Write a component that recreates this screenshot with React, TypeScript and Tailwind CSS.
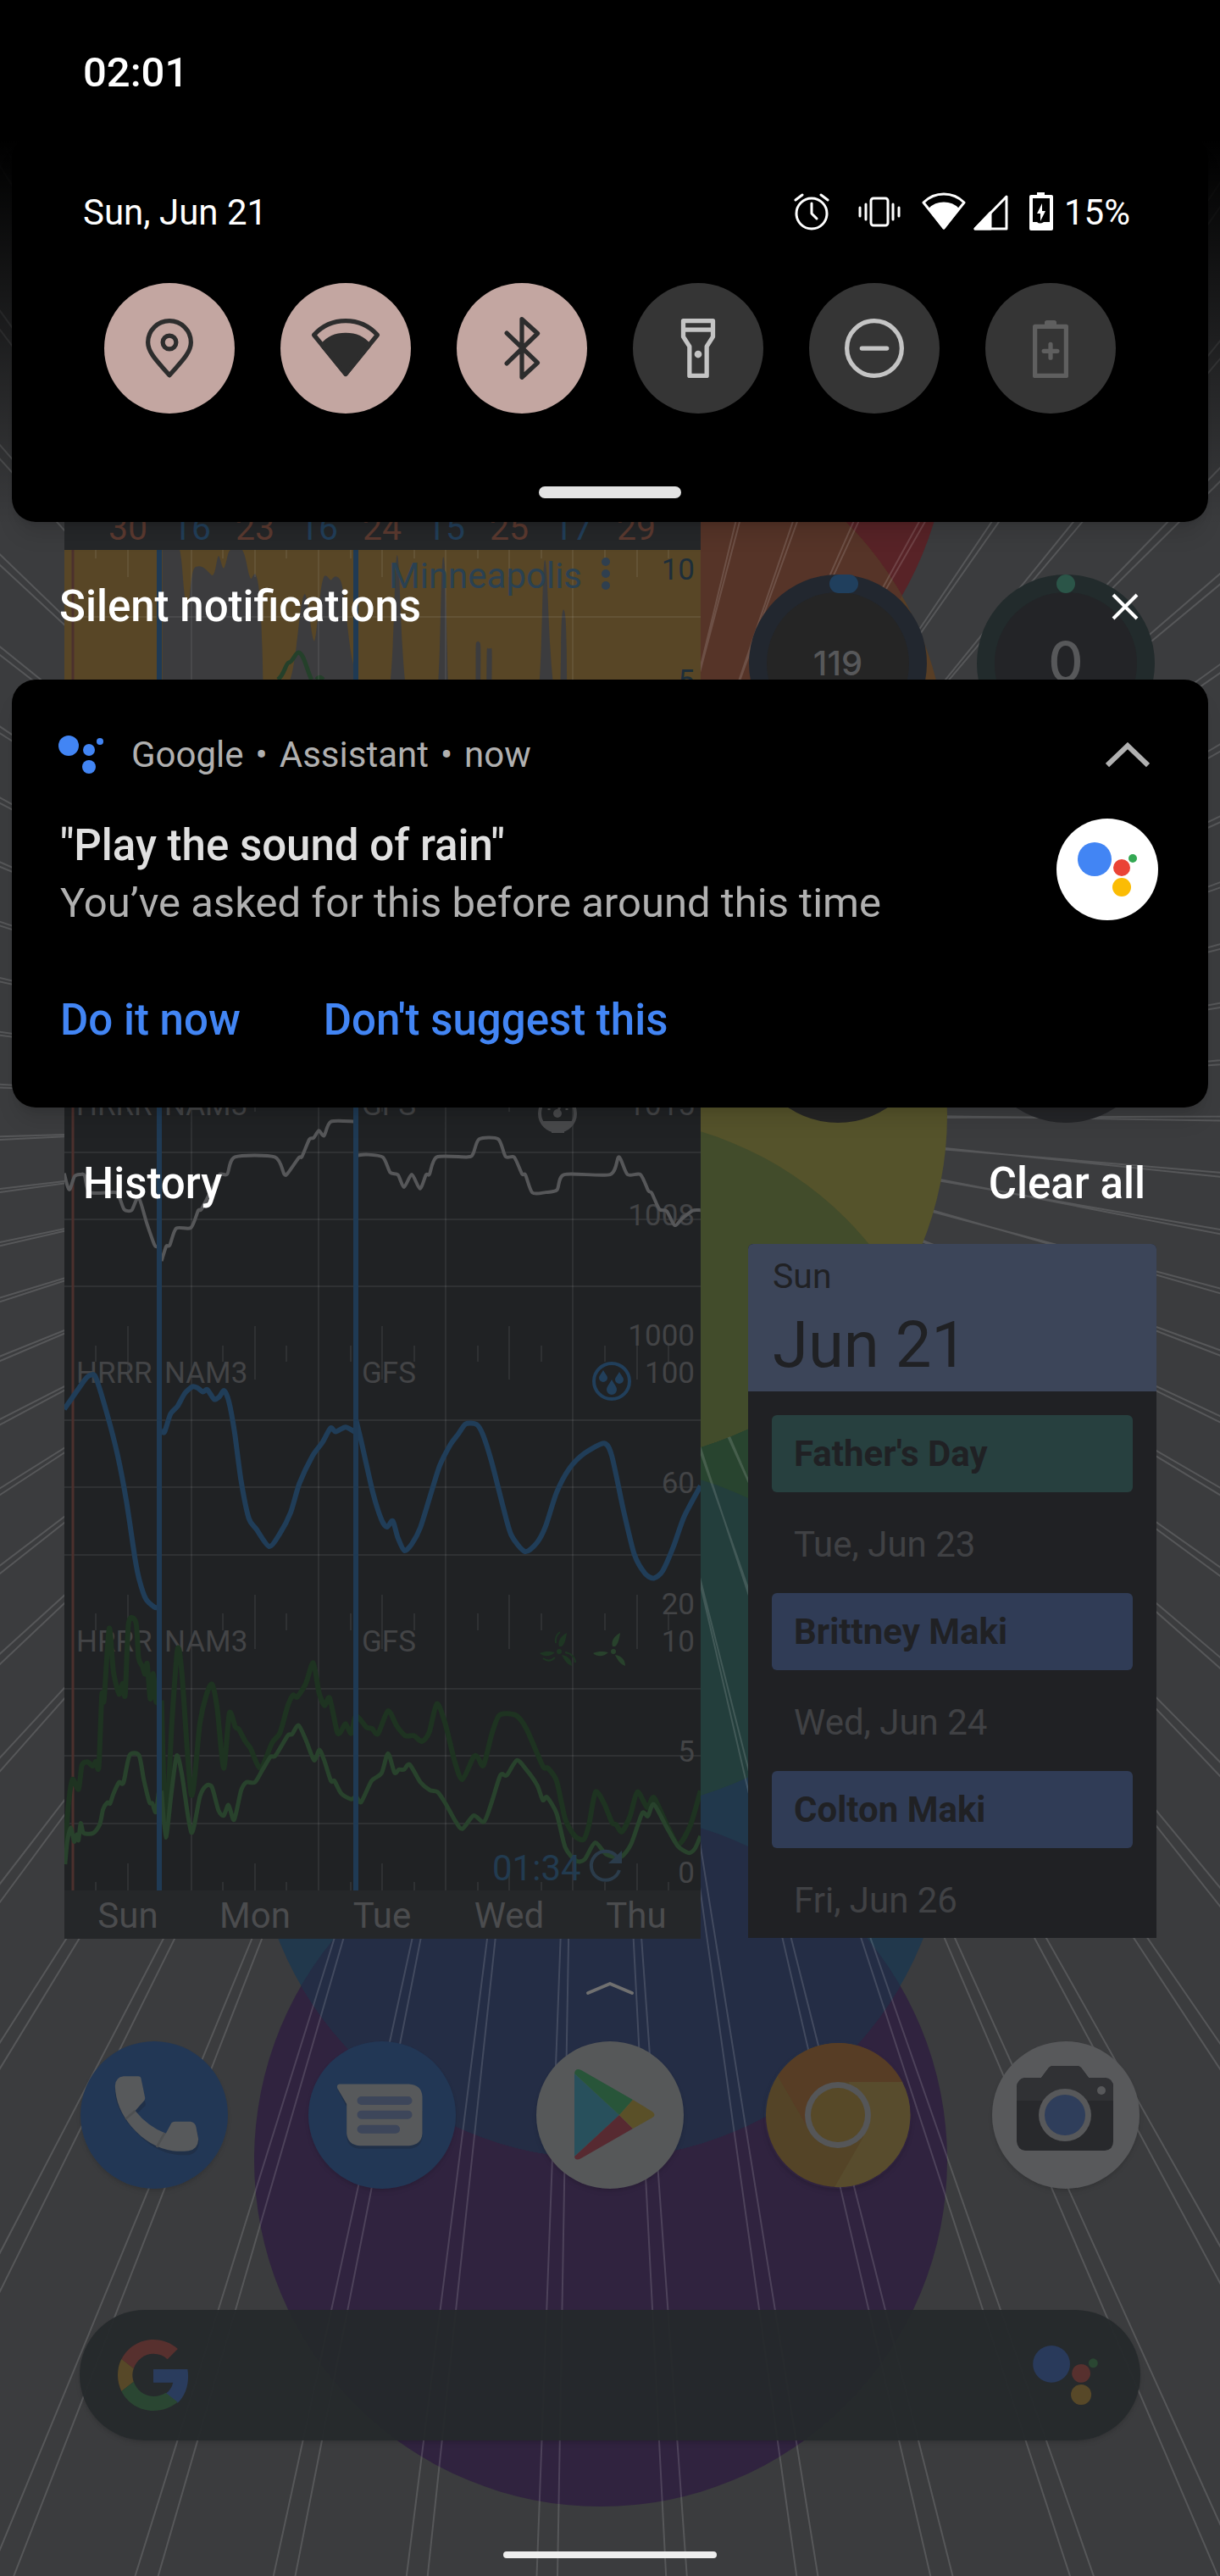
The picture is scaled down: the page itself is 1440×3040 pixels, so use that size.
import type { ReactNode } from 'react';

type Point = [number, number];

// Smooth line through the readings, for svg path data
const smooth = (points: Point[]) => {
    let d = `M${points[0][0]} ${points[0][1]}`;
    for (let i = 0; i < points.length - 1; i++) {
        const prev = points[i - 1] ?? points[i];
        const from = points[i];
        const to = points[i + 1];
        const next = points[i + 2] ?? to;
        const c1 = [from[0] + (to[0] - prev[0]) / 8, from[1] + (to[1] - prev[1]) / 8];
        const c2 = [to[0] - (next[0] - from[0]) / 8, to[1] - (next[1] - from[1]) / 8];
        d += `C${c1[0].toFixed(1)} ${c1[1].toFixed(1)} ${c2[0].toFixed(1)} ${c2[1].toFixed(1)} ${to[0]} ${to[1]}`;
    }
    return d;
};

const PRESSURE: Point[][] = [
    [[31, 265], [38, 305], [44, 318], [55, 275], [68, 269], [78, 272], [90, 328], [150, 328], [160, 350], [170, 385], [187, 387], [203, 345], [222, 430], [240, 502], [248, 507]],
    [[256, 555], [267, 506], [275, 503], [290, 447], [324, 445], [341, 388], [348, 385], [368, 330], [390, 270], [408, 268], [426, 211], [518, 211], [540, 268], [548, 265], [574, 213], [581, 210], [598, 153], [608, 148], [620, 124], [632, 141], [648, 94], [703, 94]],
    [[710, 206], [730, 203], [768, 212], [785, 262], [803, 270], [817, 311], [835, 269], [854, 316], [868, 270], [876, 268], [893, 211], [965, 211], [977, 200], [991, 152], [1035, 152], [1052, 210], [1072, 212], [1090, 267], [1098, 270], [1114, 329], [1145, 328], [1171, 320], [1188, 269], [1294, 269], [1314, 211], [1334, 269], [1364, 269], [1382, 322], [1390, 330], [1408, 384], [1425, 390], [1443, 437], [1460, 415], [1485, 388], [1503, 387]]
];

const HUMIDITY: Point[][] = [
    [[31, 1045], [60, 985], [80, 945], [92, 932], [104, 940], [130, 1060], [155, 1200], [175, 1350], [195, 1540], [205, 1610], [220, 1672], [240, 1699], [248, 1699]],
    [[256, 1115], [263, 1120], [277, 1060], [293, 1035], [310, 992], [328, 970], [340, 975], [352, 987], [362, 980], [378, 1012], [390, 1003], [401, 983], [412, 1020], [425, 1120], [440, 1280], [458, 1405], [475, 1440], [505, 1498], [530, 1455], [555, 1385], [575, 1290], [605, 1200], [628, 1155], [647, 1107], [659, 1119], [682, 1104], [706, 1122]],
    [[706, 1080], [718, 1150], [745, 1320], [765, 1410], [778, 1434], [791, 1414], [803, 1470], [818, 1512], [835, 1490], [855, 1435], [880, 1320], [900, 1230], [925, 1160], [942, 1128], [960, 1093], [985, 1095], [1000, 1130], [1020, 1220], [1045, 1360], [1065, 1460], [1097, 1515], [1125, 1485], [1145, 1430], [1170, 1320], [1200, 1240], [1235, 1190], [1280, 1157], [1298, 1200], [1325, 1380], [1350, 1525], [1375, 1588], [1395, 1603], [1415, 1580], [1440, 1500], [1465, 1400], [1503, 1298]]
];

const GUSTS: Point[][] = [
    [[33, 1160], [40, 1000], [50, 900], [64, 935], [72, 850], [85, 838], [97, 853], [104, 836], [111, 855], [118, 600], [123, 620], [135, 365], [145, 520], [158, 598], [166, 560], [172, 600], [180, 345], [197, 345], [203, 470], [212, 500], [218, 527], [223, 490], [230, 615], [237, 525], [243, 622], [250, 625]],
    [[256, 620], [266, 1075], [280, 700], [293, 440], [303, 520], [325, 955], [345, 700], [360, 600], [373, 563], [385, 650], [400, 860], [413, 665], [427, 715], [435, 722], [450, 765], [462, 790], [485, 860], [512, 770], [530, 735], [548, 640], [560, 602], [570, 608], [590, 560], [607, 487], [620, 590], [633, 638], [645, 612], [662, 730], [670, 733], [682, 703], [695, 737], [706, 675], [730, 715], [743, 720], [757, 738], [780, 657], [800, 710], [820, 745], [840, 745], [858, 765], [875, 735], [893, 632], [912, 700], [935, 840], [952, 900], [978, 820], [988, 822], [1001, 850], [1020, 740], [1038, 672], [1075, 672], [1100, 720], [1138, 852], [1150, 860], [1170, 905], [1190, 1040], [1212, 1100], [1233, 1112], [1245, 1060], [1260, 945], [1280, 985], [1298, 1052], [1308, 1060], [1321, 1085], [1340, 1030], [1357, 944], [1380, 1000], [1395, 964], [1425, 1060], [1452, 1130], [1480, 1060], [1503, 940]]
];

const WIND: Point[][] = [
    [[33, 1200], [38, 1120], [46, 1070], [54, 1120], [60, 1095], [64, 1115], [69, 1055], [76, 1090], [98, 1090], [113, 1060], [121, 1005], [131, 982], [137, 985], [145, 950], [158, 910], [168, 912], [182, 815], [204, 815], [215, 900], [228, 980], [235, 985], [243, 1016], [250, 940]],
    [[256, 940], [266, 1105], [278, 960], [291, 816], [303, 880], [325, 1088], [345, 960], [360, 922], [373, 928], [388, 1010], [400, 1028], [411, 990], [424, 1043], [440, 940], [452, 910], [472, 910], [490, 865], [508, 820], [520, 815], [548, 745], [558, 740], [573, 708], [590, 760], [609, 832], [621, 795], [632, 830], [648, 905], [656, 905], [672, 950], [695, 970], [706, 960], [718, 980], [742, 905], [765, 878], [780, 808], [795, 876], [805, 865], [817, 865], [830, 847], [855, 910], [877, 938], [895, 945], [915, 990], [935, 1045], [952, 1075], [978, 1028], [1002, 1050], [1020, 980], [1040, 885], [1055, 885], [1078, 832], [1100, 865], [1125, 920], [1138, 973], [1148, 963], [1170, 1020], [1190, 1140], [1215, 1188], [1235, 1183], [1259, 1124], [1285, 1165], [1318, 1175], [1342, 1130], [1368, 1020], [1381, 1030], [1395, 988], [1425, 1070], [1450, 1135], [1475, 1160], [1490, 1145], [1503, 1100]]
];

// [left, peak, right, top]
const CLOUD_SPIKES = [
    [785, 801, 820, 165],
    [896, 908, 919, 172],
    [983, 988, 994, 470],
    [1008, 1014, 1020, 495],
    [1130, 1143, 1162, 182],
    [1179, 1186, 1194, 358]
];

const TEMPERATURES = ['30', '16', '23', '16', '24', '15', '25', '17', '29'];
const DAYS = ['Sun', 'Mon', 'Tue', 'Wed', 'Thu'];

const AXIS_LABELS = [
    { text: '1015', y: 1316 },
    { text: '1008', y: 1446 },
    { text: '1000', y: 1588 },
    { text: '100', y: 1632 },
    { text: '60', y: 1762 },
    { text: '20', y: 1905 },
    { text: '10', y: 1949 },
    { text: '5', y: 2079 },
    { text: '0', y: 2222 }
];

const EVENTS = [
    { title: "Father's Day", nextDate: 'Tue, Jun 23', color: 'bg-[#27403f]' },
    { title: 'Brittney Maki', nextDate: 'Wed, Jun 24', color: 'bg-[#303c56]' },
    { title: 'Colton Maki', nextDate: 'Fri, Jun 26', color: 'bg-[#303c56]' }
];

const RAYS = Array.from({ length: 71 }, (_, i) => 0.3 + i * (360 / 71));

const Wallpaper = () => (
    <svg className="h-full w-full [grid-area:1/1]" viewBox="0 0 1440 3040" preserveAspectRatio="xMidYMid slice" aria-hidden="true">
        <defs>
            <clipPath id="red-disc"><circle cx="709" cy="497" r="411" /></clipPath>
            <clipPath id="green-disc"><circle cx="709" cy="1727" r="409" /></clipPath>
            <clipPath id="blue-disc"><circle cx="709" cy="2138" r="409" /></clipPath>
        </defs>
        <rect width="1440" height="3040" fill="#3b3c3e" />
        <circle cx="709" cy="2549" r="409" fill="#30233f" />
        <circle cx="709" cy="2138" r="409" fill="#21384c" />
        <circle cx="709" cy="2549" r="409" fill="#242d45" clipPath="url(#blue-disc)" />
        <circle cx="709" cy="1727" r="409" fill="#28442f" />
        <circle cx="709" cy="2138" r="409" fill="#233e3c" clipPath="url(#green-disc)" />
        <circle cx="709" cy="497" r="411" fill="#582327" />
        <circle cx="709" cy="905" r="409" fill="#583e25" />
        <circle cx="709" cy="905" r="409" fill="#563428" clipPath="url(#red-disc)" />
        <g stroke="#fff" strokeOpacity="0.14" strokeWidth="2">
            {RAYS.map((angle) => (
                <g key={angle} transform={`translate(693 1316) rotate(${angle.toFixed(2)})`}>
                    <path d="M400 -1 2200 17M400 1 2200 -17" />
                </g>
            ))}
        </g>
        <circle cx="709" cy="1316" r="409" fill="#55532b" />
        <circle cx="709" cy="1316" r="409" fill="#424c2b" clipPath="url(#green-disc)" />
    </svg>
);

const WeatherWidget = () => (
    <svg className="w-full font-[Roboto,sans-serif]" viewBox="76 560 751 1728" role="img" aria-label="Minneapolis weather forecast">
        <rect x="76" y="560" width="751" height="1728" fill="#202224" />
        <rect x="76" y="560" width="751" height="89" fill="#252729" />
        <rect x="76" y="2231" width="751" height="57" fill="#252729" />
        <rect x="76" y="649" width="751" height="300" fill="#584626" />

        <g fontSize="41" textAnchor="middle">
            {TEMPERATURES.map((temp, i) => (
                <text key={i} x={151 + i * 75} y="637" fill={i % 2 ? '#223f5a' : '#5c3a30'}>{temp}</text>
            ))}
        </g>

        <g transform="translate(60 600) scale(.5102 .3333)" fill="#3c3c3e">
            <path d="M258 620V147H298C306 190 306 330 316 345 324 330 322 215 335 207 350 200 355 210 373 238 382 235 383 175 388 168 393 175 395 210 400 212 407 200 408 150 416 147H443C455 180 455 240 464 250 467 240 470 230 473 232 485 260 488 400 491 620Z" />
            <path d="M550 620C570 560 575 310 588 302 598 330 602 465 610 470 618 440 622 240 635 238 642 240 645 258 650 252 656 240 660 236 668 250 682 270 688 520 703 565V620Z" />
            {CLOUD_SPIKES.map(([left, peak, right, top]) => (
                <path key={peak} d={`M${left} 620C${peak - 5} 450 ${peak - 6} ${top + 10} ${peak} ${top} ${peak + 7} ${top + 10} ${peak + 7} 450 ${right} 620Z`} />
            ))}
            <path
                d="M525 606C540 590 543 550 550 546 560 545 565 510 573 510 585 512 592 570 603 606M615 606Q622 590 630 606"
                fill="none"
                stroke="#24402a"
                strokeWidth="5"
                vectorEffect="non-scaling-stroke"
            />
        </g>

        <g stroke="#fff" strokeOpacity="0.07" strokeWidth="2">
            <path d="M226 649V2231M376 649V2231M526 649V2231M676 649V2231" />
            <path d="M76 728H827M76 1360H827M76 1439H827M76 1518H827M76 1676H827M76 1755H827M76 1835H827M76 1993H827M76 2072H827M76 2152H827" />
            {[151, 301, 451, 601, 752].map((x) => (
                <path key={x} d={`M${x} 649V681M${x} 1290V1312M${x} 1565V1628M${x} 1882V1946M${x} 2199V2231`} />
            ))}
            {[113, 263, 338, 414, 489, 564, 639, 714, 789].map((x) => (
                <path key={x} d={`M${x} 649V659M${x} 1588V1607M${x} 1904V1924M${x} 2221V2231`} />
            ))}
        </g>

        <path d="M86 649V2231" stroke="#4c302d" strokeWidth="3" />

        <g fontSize="35" fill="#434446">
            {[1316, 1632, 1949].map((y) => (
                <g key={y}>
                    <text x="90" y={y}>HRRR</text>
                    <text x="194" y={y}>NAM3</text>
                    <text x="427" y={y}>GFS</text>
                </g>
            ))}
            {AXIS_LABELS.map(({ text, y }) => (
                <text key={text} x="820" y={y} textAnchor="end">{text}</text>
            ))}
            <text x="820" y="684" textAnchor="end" fill="#1d2e3a">10</text>
            <text x="820" y="815" textAnchor="end" fill="#1d2e3a">5</text>
        </g>

        <g fill="none" strokeLinejoin="round">
            <g transform="translate(60 1800) scale(.5102 .3333)">
                {GUSTS.map((line, i) => (
                    <path key={i} d={smooth(line)} stroke="#1e3321" strokeWidth="6" vectorEffect="non-scaling-stroke" />
                ))}
                {WIND.map((line, i) => (
                    <path key={i} d={smooth(line)} stroke="#28422c" strokeWidth="5" vectorEffect="non-scaling-stroke" />
                ))}
            </g>
            <g transform="translate(60 1290) scale(.5102 .3571)">
                {PRESSURE.map((line, i) => (
                    <path key={i} d={smooth(line)} stroke="#565759" strokeWidth="4" vectorEffect="non-scaling-stroke" />
                ))}
                {HUMIDITY.map((line, i) => (
                    <path key={i} d={smooth(line)} stroke="#203d58" strokeWidth="6" vectorEffect="non-scaling-stroke" />
                ))}
            </g>
        </g>

        <path d="M188 649V2231M420 649V2231" stroke="#1f3a54" strokeWidth="6" />

        {/* pressure gauge */}
        <g>
            <circle cx="658" cy="1314" r="21" fill="none" stroke="#48494b" strokeWidth="4" />
            <path d="M639 1323H678Q673 1332 666 1333V1337H651V1333Q644 1332 639 1323Z" fill="#48494b" />
            <circle cx="658" cy="1314" r="5" fill="#48494b" />
            <path d="M658 1314 662 1302M648 1310V1308M669 1310V1308" stroke="#48494b" strokeWidth="3" />
        </g>

        {/* humidity */}
        <g>
            <circle cx="722" cy="1630" r="21" fill="none" stroke="#213f5b" strokeWidth="4" />
            <path
                d="M712 1617C715 1622 717 1624 717 1626A5 5 0 0 1 707 1626C707 1624 709 1622 712 1617ZM731 1619C734 1624 736 1626 736 1628A5 5 0 0 1 726 1628C726 1626 728 1624 731 1619ZM722 1628C726 1635 728 1637 728 1640A6 6 0 0 1 716 1640C716 1637 718 1635 722 1628Z"
                fill="#213f5b"
            />
        </g>

        {/* wind turbines */}
        <g fill="#28422c">
            <path d="M723 1943C721 1936 725 1931 732 1927 731 1935 729 1941 726 1943ZM718 1950C713 1955 705 1956 700 1951 707 1948 713 1949 718 1950ZM726 1953C733 1954 738 1958 738 1966 732 1964 729 1959 726 1953ZM721 1949A3 3 0 0 1 727 1949 3 3 0 0 1 721 1949Z" />
        </g>
        <g fill="#1e3623">
            <path d="M660 1943C658 1936 662 1931 669 1927 668 1935 666 1941 663 1943ZM655 1950C650 1955 642 1956 637 1951 644 1948 650 1949 655 1950ZM663 1953C670 1954 675 1958 675 1966 669 1964 666 1959 663 1953ZM657 1949A3 3 0 0 1 663 1949 3 3 0 0 1 657 1949Z" />
            <path d="M656 1939C655 1933 657 1929 661 1926M641 1957C646 1961 651 1960 655 1956M667 1950C674 1951 679 1956 679 1962" fill="none" stroke="#1e3623" strokeWidth="2" />
        </g>

        <g fontSize="42">
            <text x="459" y="694" fill="#2a4152">Minneapolis</text>
            <text x="581" y="2219" fill="#223b50">01:34</text>
            <g fill="#4b4c4e" textAnchor="middle">
                {DAYS.map((day, i) => (
                    <text key={day} x={151 + i * 150} y="2275">{day}</text>
                ))}
            </g>
        </g>
        <g fill="#2f3f4f">
            <circle cx="715" cy="663" r="5" />
            <circle cx="715" cy="677" r="5" />
            <circle cx="715" cy="691" r="5" />
        </g>
        <path d="M728 2191A17 17 0 1 0 731 2207" fill="none" stroke="#2b3c4b" strokeWidth="4" />
        <path d="M734 2184V2199H718Z" fill="#2b3c4b" />
    </svg>
);

const StatusGauges = () => (
    <svg className="w-full font-[Inter,sans-serif]" viewBox="883 560 482 908" role="img" aria-label="Status gauges">
        <circle cx="989" cy="783" r="105" fill="#22272f" />
        <circle cx="989" cy="783" r="84" fill="#252525" />
        <rect x="979" y="678" width="34" height="22" rx="11" fill="#203f5d" />
        <circle cx="1258" cy="783" r="105" fill="#222b2c" />
        <circle cx="1258" cy="783" r="84" fill="#232427" />
        <circle cx="1258" cy="689" r="11" fill="#2b5548" />
        <g fill="#57585a" textAnchor="middle" fontWeight="500">
            <text x="989" y="797" fontSize="40">119</text>
            <text x="1258" y="804" fontSize="64">0</text>
        </g>
        <circle cx="989" cy="1220" r="105" fill="#252525" />
        <circle cx="1258" cy="1220" r="105" fill="#242528" />
    </svg>
);

const CalendarWidget = () => (
    <section className="overflow-hidden rounded-t-md bg-[#202124] text-[#202124]">
        <header className="bg-[#3c4559] px-[29px] pt-[14px] pb-[10px]">
            <p className="text-[41px] leading-[48px]">Sun</p>
            <h2 className="mt-3 text-[76px] leading-[90px]">Jun 21</h2>
        </header>
        <ul className="px-7 pt-7">
            {EVENTS.map(({ title, nextDate, color }) => (
                <li key={title} className="pb-[27px] last:pb-[14px]">
                    <p className={`rounded-md px-[26px] text-[42px] leading-[91px] font-bold ${color}`}>{title}</p>
                    <p className="mt-8 px-[26px] text-[42px] leading-[60px] text-[#404144]">{nextDate}</p>
                </li>
            ))}
        </ul>
    </section>
);

const PhoneIcon = () => (
    <svg className="size-[174px]" viewBox="48 55 520 520">
        <circle cx="308" cy="315" r="260" fill="#223755" />
        <path d="M200 190H262L278 280 244 314Q290 370 345 395L375 352H440Q456 354 460 375L466 410Q464 450 430 456 340 462 270 400 168 310 170 225 172 190 200 190Z" fill="#203048" />
        <path d="M200 178H252Q261 178 262 187L276 255 274 263 241 300Q285 355 349 380L369 343Q373 338 380 338H436Q452 340 456 358L464 400Q462 436 430 441 400 444 372 441 290 428 228 356 172 290 170 212 172 180 200 178Z" fill="#57595b" />
        <path d="M207 329 241 300M317 428 345 378" stroke="#4d4f51" strokeWidth="8" />
    </svg>
);

const MessagesIcon = () => (
    <svg className="size-[174px]" viewBox="855 55 520 520">
        <circle cx="1115" cy="315" r="260" fill="#223755" />
        <path d="M958 226 990 286V390Q992 430 1035 434H1212Q1254 430 1257 390V300Z" fill="#203048" />
        <path d="M965 206H1210Q1254 208 1257 250V380Q1254 420 1210 423H1035Q994 420 990 380V276L957 220Q954 207 965 206Z" fill="#57595b" />
        <path d="M1042 264H1206M1042 314H1206M1042 365H1163" stroke="#3d465a" strokeWidth="30" strokeLinecap="round" />
    </svg>
);

const PlayIcon = () => (
    <svg className="size-[174px]" viewBox="0 0 174 174">
        <circle cx="87" cy="87" r="87" fill="#565859" />
        <path d="M45 38V136L98 87Z" fill="#28505c" />
        <path d="M45 38Q46 31 53 34L114 69 98 87Z" fill="#285539" />
        <path d="M45 136Q46 142 53 138L114 103 98 87Z" fill="#572a31" />
        <path d="M114 69 137 83Q142 87 137 90L114 103 98 87Z" fill="#5a5028" />
    </svg>
);

const ChromeIcon = () => (
    <svg className="size-[174px]" viewBox="0 0 174 174">
        <circle cx="87" cy="87" r="85" fill="#544427" />
        <path d="M16 41A85 85 0 0 1 163 48H87L49 98Z" fill="#573d25" />
        <path d="M163 48A85 85 0 0 1 83 172L117 113 100 48Z" fill="#584c2d" />
        <circle cx="87" cy="87" r="39" fill="#555658" />
        <circle cx="87" cy="87" r="32" fill="#574928" />
    </svg>
);

const CameraIcon = () => (
    <svg className="size-[174px]" viewBox="0 0 174 174">
        <circle cx="87" cy="87" r="87" fill="#58595b" />
        <path d="M39 43H58L67 31Q69 29 72 29H100Q103 29 105 31L114 43H133Q143 44 143 54V118Q143 128 133 129H39Q30 128 29 118V54Q30 44 39 43Z" fill="#28292c" />
        <path d="M39 43H58L67 31Q69 29 72 29H100Q103 29 105 31L114 43H133Q143 44 143 54V70H29V54Q30 44 39 43Z" fill="#303134" />
        <circle cx="86" cy="87" r="31" fill="#57585a" />
        <circle cx="86" cy="87" r="24" fill="#2f3e5b" />
        <circle cx="129" cy="58" r="5" fill="#57585a" />
    </svg>
);

const DOCK_APPS = [
    { name: 'Phone', icon: <PhoneIcon /> },
    { name: 'Messages', icon: <MessagesIcon /> },
    { name: 'Play Store', icon: <PlayIcon /> },
    { name: 'Chrome', icon: <ChromeIcon /> },
    { name: 'Camera', icon: <CameraIcon /> }
];

const GoogleIcon = () => (
    <svg className="size-[84px]" viewBox="0 0 46 46">
        <path fill="#57302e" d="M23 9.2c3.5 0 6.6 1.2 9.1 3.5l6.7-6.7C34.700 2.300 29.300 0 23 0 14 0 6.200 5.200 2.400 12.700l7.900 6.100C12.200 13.200 17.100 9.200 23 9.200z" />
        <path fill="#2a3c5d" d="M45.500 23.500c0-1.600-.2-3-.4-4.400H23v8.700h12.700c-.6 3-2.200 5.400-4.700 7.100l7.700 6C43.200 36.700 45.500 30.700 45.500 23.500z" />
        <path fill="#574828" d="M10.300 27.300C9.800 25.900 9.500 24.500 9.500 23s.3-3 .8-4.300l-7.900-6.100C.8 15.700 0 19.200 0 23s.9 7.300 2.400 10.400z" />
        <path fill="#2a4632" d="M23 46c6.200 0 11.400-2 15.700-5.600l-7.700-6c-2.100 1.400-4.800 2.300-8 2.300-5.900 0-10.800-4-12.700-9.400l-7.900 6.100C6.200 40.900 14 46 23 46z" />
    </svg>
);

const AssistantDots = ({ className, colors }: { className?: string; colors: [string, string, string, string] }) => (
    <svg className={className} viewBox="0 0 70 64">
        <circle cx="20" cy="20" r="20" fill={colors[0]} />
        <circle cx="52" cy="30" r="10" fill={colors[1]} />
        <circle cx="52" cy="53" r="11" fill={colors[2]} />
        <circle cx="65" cy="19" r="5" fill={colors[3]} />
    </svg>
);

const HomeScreen = () => (
    <main className="flex flex-col pt-[560px] [grid-area:1/1]">
        <div className="grid grid-cols-[751fr_482fr] gap-14 pr-[75px] pl-19">
            <WeatherWidget />
            <div className="flex flex-col">
                <StatusGauges />
                <CalendarWidget />
            </div>
        </div>

        <svg className="mt-[50px] h-[18px] w-[58px] self-center" viewBox="0 0 58 18" fill="none" stroke="#707070" strokeWidth="4" strokeLinecap="round" strokeLinejoin="round">
            <path d="M3 14 29 3 55 14" />
        </svg>

        <nav className="mt-[53px] grid grid-cols-5 px-12">
            {DOCK_APPS.map(({ name, icon }) => (
                <a key={name} href="#" aria-label={name} className="justify-self-center rounded-full shadow-md">
                    {icon}
                </a>
            ))}
        </nav>

        <div className="mx-[94px] mt-[143px] flex h-[154px] items-center justify-between rounded-full bg-[#25292b]/95 pr-[50px] pl-[45px] shadow-md">
            <button type="button" aria-label="Search"><GoogleIcon /></button>
            <button type="button" aria-label="Voice search">
                <AssistantDots className="h-[70px] w-[77px]" colors={['#293a5b', '#57302e', '#574828', '#2a4632']} />
            </button>
        </div>
    </main>
);

const TILES: { label: string; tone: string; icon: ReactNode }[] = [
    {
        label: 'Location',
        tone: 'bg-[#c3a6a1] text-[#2d2d2d]',
        icon: (
            <>
                <path d="M12 21.100C8.500 17 4.750 13.700 4.750 10a7.250 7.250 0 0 1 14.500 0c0 3.700-3.750 7-7.250 11.100z" />
                <circle cx="12" cy="10" r="2.250" />
            </>
        )
    },
    {
        label: 'Wi-Fi',
        tone: 'bg-[#c3a6a1] text-[#2d2d2d]',
        icon: (
            <>
                <path d="M12 20.700 1.300 7.500C4.200 4.300 8 2.750 12 2.750s7.800 1.550 10.700 4.750z" />
                <path d="M12 20.700 4.200 11C6 8.700 8.800 7.500 12 7.500s6 1.200 7.800 3.500z" fill="currentColor" />
            </>
        )
    },
    {
        label: 'Bluetooth',
        tone: 'bg-[#c3a6a1] text-[#2d2d2d]',
        icon: <path d="M6.900 6.900 17.300 16.900 12 21.800V2.200L17.300 7 6.900 17.100" />
    },
    {
        label: 'Flashlight',
        tone: 'bg-[#353535] text-[#c4c4c4]',
        icon: (
            <>
                <path d="M7 2.750H17V8.100L14.900 11.400V21.250H9.100V11.400L7 8.100ZM7 5.750H17" />
                <circle cx="12" cy="14" r="1.250" fill="currentColor" stroke="none" />
            </>
        )
    },
    {
        label: 'Do Not Disturb',
        tone: 'bg-[#353535] text-[#c4c4c4]',
        icon: (
            <>
                <circle cx="12" cy="12" r="9.250" />
                <path d="M7.800 12H16.200" />
            </>
        )
    },
    {
        label: 'Battery Saver',
        tone: 'bg-[#353535] text-[#5f5f5f]',
        icon: <path d="M6.750 4.700H17.250V21.250H6.750ZM10.750 4.200V3.300H13.250V4.200ZM12 10.700V15.200M9.750 12.950H14.250" />
    }
];

const StatusIcons = () => (
    <div className="flex items-center text-white">
        <svg className="mr-[34px] h-[48px] w-[42px]" viewBox="0 0 42 48" fill="none" stroke="currentColor" strokeWidth="3" strokeLinecap="round" strokeLinejoin="round">
            <circle cx="21" cy="25" r="18" />
            <path d="M21 13V25L27 31M2 9 10 3M40 9 32 3" />
        </svg>
        <svg className="mr-[25px] h-[48px] w-[50px]" viewBox="0 0 50 48" fill="none" stroke="currentColor" strokeWidth="3" strokeLinecap="round">
            <rect x="15" y="7" width="20" height="32" rx="3" />
            <path d="M2 18V28M9 14V32M41 14V32M48 18V28" />
        </svg>
        <svg className="mr-2 h-[48px] w-[52px]" viewBox="0 0 52 48" fill="none" stroke="currentColor" strokeWidth="3" strokeLinejoin="round">
            <path d="M26 42 2 12Q12 2 26 2T50 12Z" />
            <path d="M26 42 9 20Q16 13 26 13T43 20Z" fill="currentColor" />
        </svg>
        <svg className="mr-6 h-[48px] w-[43px]" viewBox="0 0 43 48" fill="none" stroke="currentColor" strokeWidth="3" strokeLinejoin="round">
            <path d="M40 5V43H3Z" />
            <path d="M21 24V43H3Z" fill="currentColor" />
        </svg>
        <svg className="mr-[13px] h-[48px] w-[28px]" viewBox="0 0 28 48" fill="currentColor">
            <path d="M9 0H18V3H9Z" />
            <path d="M2 3H26Q28 3 28 5V43Q28 45 26 45H2Q0 45 0 43V5Q0 3 2 3ZM4 7V35H9Q12 38 17 35H24V7Z" fillRule="evenodd" />
            <path d="M15 13 9 25H13V34L19 22H15Z" />
        </svg>
        <span className="text-[42px] leading-[60px]">15%</span>
    </div>
);

const QuickSettings = () => (
    <section className="mx-[14px] mt-11 rounded-[28px] bg-black px-[82px] pt-[61px] pb-7 shadow-xl">
        <div className="flex items-center justify-between pr-[10px] pl-[2px] text-white">
            <p className="text-[42px] leading-[60px]">Sun, Jun 21</p>
            <StatusIcons />
        </div>
        <div className="mt-[53px] grid grid-cols-6 justify-items-center">
            {TILES.map(({ label, tone, icon }) => (
                <button key={label} type="button" aria-label={label} className={`flex size-[154px] items-center justify-center rounded-full ${tone}`}>
                    <svg className="size-21" viewBox="0 0 24 24" fill="none" stroke="currentColor" strokeWidth="1.500" strokeLinecap="round" strokeLinejoin="round">
                        {icon}
                    </svg>
                </button>
            ))}
        </div>
        <div className="mx-auto mt-[86px] h-[14px] w-[168px] rounded-full bg-[#e3e3e3]" />
    </section>
);

const AssistantNotification = () => (
    <article className="mx-[14px] mt-14 rounded-[28px] bg-black pt-[65px] pr-[59px] pb-[73px] pl-[55px] shadow-xl">
        <header className="flex items-center pr-[10px]">
            <svg className="h-[48px] w-[54px]" viewBox="0 0 54 48" fill="#4285f4">
                <circle cx="12" cy="13" r="12" />
                <circle cx="36" cy="18" r="7" />
                <circle cx="49" cy="8" r="4" />
                <circle cx="36" cy="38" r="8" />
            </svg>
            <p className="ml-8 flex flex-1 gap-[14px] text-[42px] leading-[48px] text-[#b0b0b0]">
                <span>Google</span>
                <span>•</span>
                <span>Assistant</span>
                <span>•</span>
                <span>now</span>
            </p>
            <button type="button" aria-label="Collapse">
                <svg className="h-[30px] w-[52px]" viewBox="0 0 52 30" fill="none" stroke="#b0b0b0" strokeWidth="6">
                    <path d="M2 27 26 4 50 27" />
                </svg>
            </button>
        </header>
        <div className="mt-[49px] flex items-start justify-between pl-[2px]">
            <div className="leading-[68px]">
                <h2 className="text-[51px] font-medium text-[#e0e0e0]">"Play the sound of rain"</h2>
                <p className="text-[49px] text-[#b0b0b0]">You’ve asked for this before around this time</p>
            </div>
            <div className="mt-[2px] flex size-[120px] items-center justify-center rounded-full bg-white">
                <AssistantDots className="h-[64px] w-[70px]" colors={['#4285f4', '#ea4335', '#fbbc04', '#34a853']} />
            </div>
        </div>
        <div className="mt-[74px] flex gap-[98px] pl-[2px] text-[51px] leading-[60px] font-medium text-[#4285f4]">
            <button type="button">Do it now</button>
            <button type="button">Don't suggest this</button>
        </div>
    </article>
);

const NotificationShade = () => (
    <div className="flex flex-col bg-[linear-gradient(#000_165px,transparent_620px)] pb-[21px] [grid-area:1/1]">
        <p className="px-[98px] pt-14 text-[49px] leading-[60px] font-medium text-white">02:01</p>
        <QuickSettings />

        <div className="mt-[70px] flex items-center justify-between pr-24 pl-[70px] text-white">
            <h1 className="text-[51px] leading-[60px] font-medium">Silent notifications</h1>
            <button type="button" aria-label="Clear silent notifications">
                <svg className="size-8" viewBox="0 0 32 32" fill="none" stroke="currentColor" strokeWidth="4">
                    <path d="M2 2 30 30M30 2 2 30" />
                </svg>
            </button>
        </div>

        <AssistantNotification />

        <div className="mt-[60px] flex items-center justify-between pr-[88px] pl-[98px] text-[51px] leading-[60px] font-medium text-white">
            <button type="button">History</button>
            <button type="button">Clear all</button>
        </div>

        <div className="mx-auto mt-auto h-2 w-[252px] rounded-full bg-[#eeeeee]" />
    </div>
);

export default function App() {
    return (
        <div className="grid min-h-screen grid-cols-[minmax(0,1fr)] overflow-hidden bg-[#3b3c3e] font-[Roboto,sans-serif]">
            <Wallpaper />
            <HomeScreen />
            <NotificationShade />
        </div>
    );
}
